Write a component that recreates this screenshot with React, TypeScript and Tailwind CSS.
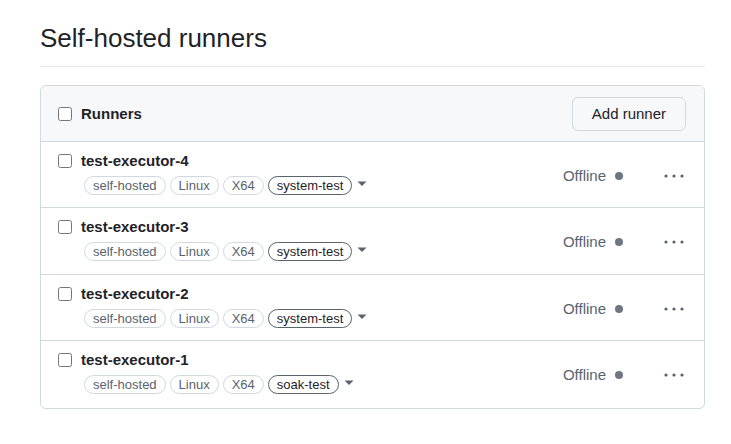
import React from "react";

type Runner = { name: string; labels: string[]; custom: string };

const runners: Runner[] = [
  { name: "test-executor-4", labels: ["self-hosted", "Linux", "X64"], custom: "system-test" },
  { name: "test-executor-3", labels: ["self-hosted", "Linux", "X64"], custom: "system-test" },
  { name: "test-executor-2", labels: ["self-hosted", "Linux", "X64"], custom: "system-test" },
  { name: "test-executor-1", labels: ["self-hosted", "Linux", "X64"], custom: "soak-test" },
];

const rowPad = [
  "pb-[12px] border-b border-[#d1d9e0]",
  "pb-[13px] border-b border-[#d1d9e0]",
  "pb-[12px] border-b border-[#d1d9e0]",
  "pb-[14px]",
];

function Kebab() {
  return (
    <svg width="22" height="6" viewBox="0 0 22 6" fill="#59636e">
      <circle cx="3" cy="3" r="1.6" />
      <circle cx="11" cy="3" r="1.6" />
      <circle cx="19" cy="3" r="1.6" />
    </svg>
  );
}

function Caret() {
  return (
    <svg width="10" height="6" viewBox="0 0 10 6" fill="#59636e">
      <path d="M0.5 0.5 L9.5 0.5 L5 5 Z" />
    </svg>
  );
}

export default function App() {
  return (
    <div
      className="w-[731px] h-[444px] bg-white pl-10 pr-[26px] text-[#1f2328]"
      style={{ fontFamily: '"Liberation Sans", Arial, sans-serif' }}
    >
      <div className="pt-5 pb-[10px] border-b border-[#e4e8ec]">
        <h1 className="text-[26px] leading-[36px] font-normal">Self-hosted runners</h1>
      </div>

      <div className="mt-[18px] border border-[#d1d9e0] rounded-md overflow-hidden">
        <div className="h-[56px] bg-[#f6f8fa] border-b border-[#d1d9e0] flex items-center pl-[17px] pr-[18px]">
          <input type="checkbox" className="w-[14px] h-[14px] m-0" />
          <span className="ml-[9px] text-[15px] font-bold leading-5">Runners</span>
          <button className="ml-auto h-[34px] px-[19px] bg-[#f6f8fa] border border-[#d1d9e0] rounded-md text-[15px] leading-5 text-[#1f2328]">
            Add runner
          </button>
        </div>

        {runners.map((r, i) => (
          <div key={r.name} className={"flex items-start pl-[17px] pr-[19px] pt-[9px] " + rowPad[i]}>
            <div className="flex-1">
              <div className="flex items-center">
                <input type="checkbox" className="w-[14px] h-[14px] m-0" />
                <span className="ml-[9px] text-[15px] font-bold leading-5">{r.name}</span>
              </div>
              <div className="mt-[5px] ml-[26px] flex items-center gap-1">
                {r.labels.map((l) => (
                  <span
                    key={l}
                    className="h-[19px] px-2 border border-[#d1d9e0] rounded-full text-[13px] leading-[17px] text-[#59636e]"
                  >
                    {l}
                  </span>
                ))}
                <span className="h-[19px] px-2 border border-[#59636e] rounded-full text-[13px] leading-[17px] text-[#1f2328]">
                  {r.custom}
                </span>
                <span className="ml-[1px] mb-[3px]">
                  <Caret />
                </span>
              </div>
            </div>
            <div className="mt-[15px] flex items-center">
              <span className="text-[15px] leading-5 text-[#59636e]">Offline</span>
              <span className="ml-[9px] w-2 h-2 rounded-full bg-[#6e7781]" />
              <span className="ml-[40px] flex items-center">
                <Kebab />
              </span>
            </div>
          </div>
        ))}
      </div>
    </div>
  );
}
